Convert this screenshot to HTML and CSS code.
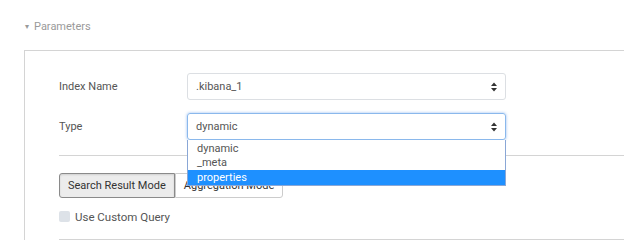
FILE: index.html
```html
<!DOCTYPE html>
<html>
<head>
<meta charset="utf-8">
<link rel="stylesheet" href="styles.css">
</head>
<body>
<div class="heading"><span class="caret">&#9662;</span>Parameters</div>
<div class="panel">
  <div class="row">
    <div class="label">Index Name</div>
    <div class="select">
      <span>.kibana_1</span>
      <svg class="arrows" width="6" height="10" viewBox="0 0 6 10"><path d="M0 4 L3 0.5 L6 4 Z M0 6 L3 9.5 L6 6 Z" fill="#333"/></svg>
    </div>
  </div>
  <div class="row row2">
    <div class="label">Type</div>
    <div class="select focus">
      <span>dynamic</span>
      <svg class="arrows" width="6" height="10" viewBox="0 0 6 10"><path d="M0 4 L3 0.5 L6 4 Z M0 6 L3 9.5 L6 6 Z" fill="#333"/></svg>
      <ul class="dropdown">
        <li>dynamic</li>
        <li>_meta</li>
        <li class="sel">properties</li>
      </ul>
    </div>
  </div>
  <div class="divider"></div>
  <div class="modes">
    <div class="btn active">Search Result Mode</div>
    <div class="btn">Aggregation Mode</div>
  </div>
  <div class="check"><span class="box"></span>Use Custom Query</div>
  <div class="divider bottom"></div>
</div>
</body>
</html>
```
FILE: styles.css
```css
html, body {
  margin: 0;
  padding: 0;
  background: #fff;
  overflow: hidden;
  width: 624px;
  height: 240px;
}
body {
  font-family: Roboto, "Liberation Sans", sans-serif;
  font-size: 11px;
  color: #444;
}
.heading {
  padding: 20px 0 0 25px;
  height: 30px;
  line-height: 14px;
  color: #9a9a9a;
  box-sizing: border-box;
}
.caret {
  font-size: 8px;
  margin-right: 5px;
  vertical-align: 1px;
}
.panel {
  margin-left: 24px;
  margin-top: 20px;
  border-top: 1px solid #d4d4d4;
  border-left: 1px solid #d4d4d4;
  padding: 22px 0 0 34px;
  box-sizing: border-box;
  height: 200px;
}
.row {
  display: flex;
  align-items: center;
  height: 27px;
}
.row2 {
  margin-top: 13px;
}
.label {
  width: 128px;
  color: #555;
}
.select {
  position: relative;
  width: 319px;
  height: 27px;
  box-sizing: border-box;
  border: 1px solid #dcdfe3;
  border-radius: 3px;
  display: flex;
  align-items: center;
  padding: 0 8px;
  color: #555;
}
.select span {
  flex: 1;
}
.select.focus {
  border-color: #8ab8ec;
  box-shadow: 0 0 3px rgba(102, 160, 233, 0.7);
}
.arrows {
  display: block;
}
.dropdown {
  position: absolute;
  left: -1px;
  top: 26px;
  width: 319px;
  margin: 0;
  padding: 1px 0 0;
  list-style: none;
  background: #fff;
  border: 1px solid #8aa7d6;
  border-top: none;
  box-sizing: border-box;
  z-index: 5;
}
.dropdown li {
  height: 15px;
  line-height: 15px;
  padding-left: 9px;
  color: #555;
  font-size: 11px;
}
.dropdown li:first-child {
  height: 14px;
}
.dropdown li.sel {
  background: #1e90ff;
  color: #fff;
}
.divider {
  margin-top: 15px;
  height: 1px;
  background: #d4d4d4;
}
.modes {
  display: flex;
  margin-top: 17px;
  height: 25px;
}
.btn {
  height: 25px;
  box-sizing: border-box;
  border: 1px solid #ccc;
  background: #fff;
  color: #333;
  line-height: 23px;
  padding: 0 8px;
  border-radius: 0 3px 3px 0;
  font-size: 11px;
}
.btn.active {
  background: #ececec;
  border-color: #8a8a8a;
  border-radius: 3px 0 0 3px;
  box-shadow: inset 0 1px 2px rgba(0,0,0,0.12);
}
.check {
  display: flex;
  align-items: center;
  margin-top: 12px;
  height: 13px;
  color: #555;
  font-size: 11.5px;
}
.box {
  width: 11px;
  height: 11px;
  border-radius: 2px;
  background: #dde2e8;
  margin-right: 5px;
}
.divider.bottom {
  margin-top: 16px;
}
```
